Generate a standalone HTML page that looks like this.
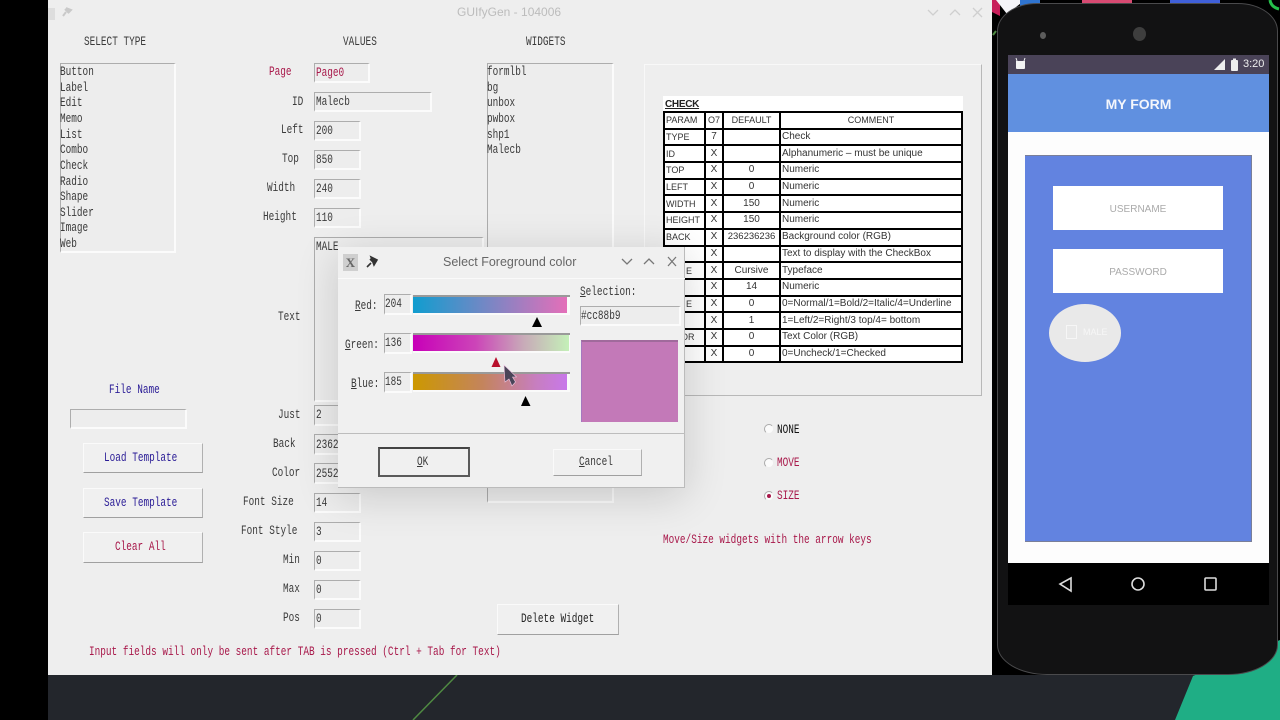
<!DOCTYPE html>
<html><head><meta charset="utf-8"><style>
html,body{margin:0;padding:0;background:#000;width:1280px;height:720px;overflow:hidden}
div{box-sizing:border-box}
#w{position:absolute;left:0;top:0;width:1280px;height:720px;overflow:hidden;filter:blur(.3px)}
.a{position:absolute}
.t{position:absolute;font:13px/14px "Liberation Mono",monospace;color:#3a3a3a;transform:scaleX(.723);transform-origin:0 0;white-space:nowrap}
.r{color:#a8184a}.b{color:#2a1c96}
.i{position:absolute;background:#ededed;border:solid;border-color:#adadad #fbfbfb #fbfbfb #adadad;border-width:1px 2px 2px 1px}
.btn{position:absolute;background:#f0f0f0;border:1px solid;border-color:#fafafa #b0b0b0 #a0a0a0 #fafafa}
table{position:absolute;left:663px;top:111px;width:300px;height:251px;border-collapse:collapse;table-layout:fixed;background:#fff;font:10px/12px "Liberation Sans",sans-serif;color:#333}
td{box-sizing:border-box;border:2px solid #000;padding:0 0 0 1px;height:16.7px;overflow:hidden;white-space:nowrap}
td:first-child,tr:first-child td{font-size:9px}
td.c{text-align:center;padding:0}
</style></head><body><div id="w">
<!-- backdrop -->
<div class="a" style="left:48px;top:675px;width:1232px;height:45px;background:#23262c"></div>
<svg class="a" style="left:0;top:0" width="1280" height="720">
<polygon points="1175,720 1193,676 1280,640 1280,720" fill="#1fae85"/>
<line x1="413" y1="720" x2="457" y2="675" stroke="#4f8a42" stroke-width="1.5"/>
<polygon points="992,0 1000,0 1000,16 992,12" fill="#c81e5a"/>
<polygon points="996,0 1025,0 1007,14" fill="#f4f4f8"/>
<rect x="1020" y="0" width="20" height="8" fill="#2f74d0"/>
<rect x="1082" y="0" width="50" height="3" fill="#d84a72"/>
<rect x="1170" y="0" width="50" height="3" fill="#3f5fd8"/>
<path d="M1270 0q1 7 9 9" stroke="#25c04a" stroke-width="3" fill="none"/>
<path d="M993 35l3-4" stroke="#4f8a42" stroke-width="2"/>
</svg>
<!-- main window -->
<div class="a" style="left:48px;top:0;width:944px;height:675px;background:#eeeeee"></div>
<div class="a" style="left:48px;top:8px;width:7px;height:12px;background:#ddd"></div>
<svg class="a" style="left:60px;top:5px" width="14" height="14"><path d="M3 11L6 7M5 4l4 4M6 3l5 2-3 3" stroke="#c9c9c9" stroke-width="2" fill="#c9c9c9"/></svg>
<div class="a" style="left:457px;top:5px;font:12px/15px 'Liberation Sans',sans-serif;color:#bcbcbc;white-space:nowrap">GUIfyGen - 104006</div>
<svg class="a" style="left:925px;top:6px" width="62" height="14" fill="none" stroke="#cfcfcf" stroke-width="1.3"><path d="M3 4l5 5 5-5M25 9l5-5 5 5M48 2l9 9M57 2l-9 9"/></svg>

<div class="t" style="left:84px;top:35px">SELECT TYPE</div>
<div class="t" style="left:343px;top:35px">VALUES</div>
<div class="t" style="left:526px;top:35px">WIDGETS</div>

<div class="i" style="left:60px;top:63px;width:116px;height:190px"></div>
<div class="t" style="left:60px;top:65px">Button</div><div class="t" style="left:60px;top:81px">Label</div><div class="t" style="left:60px;top:96px">Edit</div><div class="t" style="left:60px;top:112px">Memo</div><div class="t" style="left:60px;top:128px">List</div><div class="t" style="left:60px;top:143px">Combo</div><div class="t" style="left:60px;top:159px">Check</div><div class="t" style="left:60px;top:175px">Radio</div><div class="t" style="left:60px;top:190px">Shape</div><div class="t" style="left:60px;top:206px">Slider</div><div class="t" style="left:60px;top:221px">Image</div><div class="t" style="left:60px;top:237px">Web</div>

<div class="t r" style="left:269px;top:65px">Page</div>
<div class="t" style="left:292px;top:95px">ID</div><div class="t" style="left:281px;top:123px">Left</div><div class="t" style="left:282px;top:152px">Top</div><div class="t" style="left:267px;top:181px">Width</div><div class="t" style="left:263px;top:210px">Height</div><div class="t" style="left:278px;top:310px">Text</div><div class="t" style="left:278px;top:408px">Just</div><div class="t" style="left:273px;top:437px">Back</div><div class="t" style="left:272px;top:466px">Color</div><div class="t" style="left:243px;top:495px">Font Size</div><div class="t" style="left:241px;top:524px">Font Style</div><div class="t" style="left:283px;top:553px">Min</div><div class="t" style="left:283px;top:582px">Max</div><div class="t" style="left:283px;top:611px">Pos</div>

<div class="i" style="left:314px;top:63px;width:56px;height:20px"></div><div class="t r" style="left:316px;top:66px">Page0</div>
<div class="i" style="left:314px;top:92px;width:118px;height:20px"></div><div class="t" style="left:316px;top:95px">Malecb</div>
<div class="i" style="left:314px;top:121px;width:47px;height:20px"></div><div class="t" style="left:316px;top:124px">200</div>
<div class="i" style="left:314px;top:150px;width:47px;height:20px"></div><div class="t" style="left:316px;top:153px">850</div>
<div class="i" style="left:314px;top:179px;width:47px;height:20px"></div><div class="t" style="left:316px;top:182px">240</div>
<div class="i" style="left:314px;top:208px;width:47px;height:20px"></div><div class="t" style="left:316px;top:211px">110</div>
<div class="i" style="left:314px;top:237px;width:170px;height:165px"></div><div class="t" style="left:316px;top:240px">MALE</div>
<div class="i" style="left:314px;top:405px;width:47px;height:21px"></div><div class="t" style="left:316px;top:408px">2</div>
<div class="i" style="left:314px;top:434px;width:47px;height:21px"></div><div class="t" style="left:316px;top:438px">236236236</div>
<div class="i" style="left:314px;top:463px;width:47px;height:21px"></div><div class="t" style="left:316px;top:467px">255255255</div>
<div class="i" style="left:314px;top:493px;width:47px;height:20px"></div><div class="t" style="left:316px;top:496px">14</div>
<div class="i" style="left:314px;top:522px;width:47px;height:20px"></div><div class="t" style="left:316px;top:525px">3</div>
<div class="i" style="left:314px;top:551px;width:47px;height:20px"></div><div class="t" style="left:316px;top:554px">0</div>
<div class="i" style="left:314px;top:580px;width:47px;height:20px"></div><div class="t" style="left:316px;top:583px">0</div>
<div class="i" style="left:314px;top:609px;width:47px;height:20px"></div><div class="t" style="left:316px;top:612px">0</div>

<div class="i" style="left:487px;top:63px;width:127px;height:440px"></div>
<div class="t" style="left:487px;top:65px">formlbl</div><div class="t" style="left:487px;top:81px">bg</div><div class="t" style="left:487px;top:96px">unbox</div><div class="t" style="left:487px;top:112px">pwbox</div><div class="t" style="left:487px;top:128px">shp1</div><div class="t" style="left:487px;top:143px">Malecb</div>

<div class="a" style="left:644px;top:64px;width:338px;height:332px;border:1px solid;border-color:#f8f8f8 #b8b8b8 #b8b8b8 #f8f8f8"></div>
<div class="a" style="left:663px;top:96px;width:300px;height:15px;background:#fff;font:bold 10px/17px 'Liberation Sans',sans-serif;color:#222;padding-left:2px;letter-spacing:-.3px"><u>CHECK</u></div>
<table>
<colgroup><col style="width:41px"><col style="width:18px"><col style="width:57px"><col></colgroup>
<tr><td>PARAM</td><td class="c">O7</td><td class="c">DEFAULT</td><td class="c">COMMENT</td></tr>
<tr><td>TYPE</td><td class="c">7</td><td></td><td>Check</td></tr>
<tr><td>ID</td><td class="c">X</td><td></td><td>Alphanumeric – must be unique</td></tr>
<tr><td>TOP</td><td class="c">X</td><td class="c">0</td><td>Numeric</td></tr>
<tr><td>LEFT</td><td class="c">X</td><td class="c">0</td><td>Numeric</td></tr>
<tr><td>WIDTH</td><td class="c">X</td><td class="c">150</td><td>Numeric</td></tr>
<tr><td>HEIGHT</td><td class="c">X</td><td class="c">150</td><td>Numeric</td></tr>
<tr><td>BACK</td><td class="c">X</td><td class="c" style="font-size:9.500px">236236236</td><td>Background color (RGB)</td></tr>
<tr><td></td><td class="c">X</td><td></td><td>Text to display with the CheckBox</td></tr>
<tr><td style="padding-left:21px">E</td><td class="c">X</td><td class="c">Cursive</td><td>Typeface</td></tr>
<tr><td></td><td class="c">X</td><td class="c">14</td><td>Numeric</td></tr>
<tr><td style="padding-left:21px">E</td><td class="c">X</td><td class="c">0</td><td>0=Normal/1=Bold/2=Italic/4=Underline</td></tr>
<tr><td></td><td class="c">X</td><td class="c">1</td><td>1=Left/2=Right/3 top/4= bottom</td></tr>
<tr><td style="padding-left:16px">OR</td><td class="c">X</td><td class="c">0</td><td>Text Color (RGB)</td></tr>
<tr><td></td><td class="c">X</td><td class="c">0</td><td>0=Uncheck/1=Checked</td></tr>
</table>

<div class="t b" style="left:109px;top:383px">File Name</div>
<div class="i" style="left:70px;top:409px;width:117px;height:20px"></div>
<div class="btn" style="left:83px;top:443px;width:120px;height:30px"></div><div class="t b" style="left:104px;top:451px">Load Template</div>
<div class="btn" style="left:83px;top:488px;width:120px;height:30px"></div><div class="t b" style="left:104px;top:496px">Save Template</div>
<div class="btn" style="left:83px;top:532px;width:120px;height:31px"></div><div class="t r" style="left:115px;top:540px">Clear All</div>
<div class="btn" style="left:497px;top:604px;width:122px;height:31px"></div><div class="t" style="left:521px;top:612px;color:#222">Delete Widget</div>
<div class="t r" style="left:89px;top:645px">Input fields will only be sent after TAB is pressed (Ctrl + Tab for Text)</div>

<div class="a" style="left:764px;top:424px;width:10px;height:10px;border-radius:50%;background:#fbfbfb;border:1px solid #eee;border-left-color:#aaa;border-top-color:#aaa"></div><div class="t" style="left:777px;top:423px;color:#111">NONE</div>
<div class="a" style="left:764px;top:458px;width:10px;height:10px;border-radius:50%;background:#fbfbfb;border:1px solid #eee;border-left-color:#aaa;border-top-color:#aaa"></div><div class="t r" style="left:777px;top:456px">MOVE</div>
<div class="a" style="left:764px;top:491px;width:10px;height:10px;border-radius:50%;background:#fbfbfb;border:1px solid #eee;border-left-color:#aaa;border-top-color:#aaa"></div><div class="a" style="left:767px;top:494px;width:4px;height:4px;border-radius:50%;background:#a8184a"></div><div class="t r" style="left:777px;top:489px">SIZE</div>
<div class="t r" style="left:663px;top:533px">Move/Size widgets with the arrow keys</div>

<!-- dialog -->
<div class="a" style="left:338px;top:247px;width:347px;height:241px;background:#f0f0f0;border-right:1px solid #bbb;border-bottom:1px solid #bbb;box-shadow:0 8px 40px rgba(0,0,0,.16)"></div>
<div class="a" style="left:338px;top:278px;width:347px;height:1px;background:#fafafa"></div>
<div class="a" style="left:343px;top:254px;width:15px;height:17px;background:#cfcfcf;font:bold 13px/17px 'Liberation Serif',serif;color:#666;text-align:center">X</div>
<svg class="a" style="left:365px;top:254px" width="15" height="15"><path d="M2 13L6 9M5 5l5 5M6 3l6 3-3 5z" stroke="#333" stroke-width="1.600" fill="#333"/></svg>
<div class="a" style="left:443px;top:254px;font:12.500px/16px 'Liberation Sans',sans-serif;color:#666;white-space:nowrap">Select Foreground color</div>
<svg class="a" style="left:620px;top:255px" width="60" height="14" fill="none" stroke="#777" stroke-width="1.300"><path d="M2 4l5 5 5-5M24 9l5-5 5 5M48 2l8 9M56 2l-8 9"/></svg>

<div class="t" style="left:355px;top:299px"><u>R</u>ed:</div><div class="t" style="left:345px;top:338px"><u>G</u>reen:</div><div class="t" style="left:351px;top:377px"><u>B</u>lue:</div>
<div class="i" style="left:384px;top:294px;width:28px;height:21px"></div><div class="t" style="left:385px;top:297px">204</div>
<div class="i" style="left:384px;top:333px;width:28px;height:21px"></div><div class="t" style="left:385px;top:336px">136</div>
<div class="i" style="left:384px;top:372px;width:28px;height:21px"></div><div class="t" style="left:385px;top:375px">185</div>
<div class="a" style="left:413px;top:295px;width:157px;height:20px;background:#fafafa;border-top:2px solid #9a9a9a"></div><div class="a" style="left:413px;top:297px;width:154px;height:16px;background:linear-gradient(90deg,#109dcf,#e46fb9)"></div>
<div class="a" style="left:413px;top:333px;width:157px;height:20px;background:#fafafa;border-top:2px solid #9a9a9a"></div><div class="a" style="left:413px;top:335px;width:156px;height:16px;background:linear-gradient(90deg,#c800b8,#cc44b8 40%,#c8a8b8 70%,#c4f0b8)"></div>
<div class="a" style="left:413px;top:372px;width:157px;height:20px;background:#fafafa;border-top:2px solid #9a9a9a"></div><div class="a" style="left:413px;top:374px;width:154px;height:16px;background:linear-gradient(90deg,#cc9800,#c4845c 45%,#c77ec0 80%,#c878ea)"></div>
<svg class="a" style="left:520px;top:316px" width="24" height="14"><polygon points="17,1 12,11 22,11" fill="#000"/></svg>
<svg class="a" style="left:489px;top:356px" width="14" height="14"><polygon points="7,1 2.500,11 11.500,11" fill="#b8102c"/></svg>
<svg class="a" style="left:519px;top:395px" width="14" height="14"><polygon points="6.500,1 2,11 11.500,11" fill="#000"/></svg>
<div class="t" style="left:580px;top:285px"><u>S</u>election:</div>
<div class="i" style="left:580px;top:306px;width:101px;height:20px"></div><div class="t" style="left:581px;top:309px">#cc88b9</div>
<div class="a" style="left:581px;top:340px;width:97px;height:82px;background:#c379b8;border-top:2px solid #a06a9c;border-left:1px solid #a578c0"></div>
<svg class="a" style="left:500px;top:362px" width="20" height="26"><path d="M4 3L5 20 9 17 12 24 15.500 20 12.500 15 16.500 15Z" fill="#4a4458" stroke="#efc8e4" stroke-width=".6"/></svg>
<div class="a" style="left:338px;top:433px;width:347px;height:1px;background:#bdbdbd"></div>
<div class="a" style="left:378px;top:447px;width:92px;height:30px;background:#f0f0f0;border:2px solid #5a5a5a;border-top-color:#444"></div><div class="t" style="left:417px;top:455px"><u>O</u>K</div>
<div class="btn" style="left:553px;top:449px;width:89px;height:27px"></div><div class="t" style="left:579px;top:455px"><u>C</u>ancel</div>

<!-- phone -->
<div class="a" style="left:997px;top:3px;width:281px;height:672px;background:#121213;border-radius:40px 40px 50px 50px / 28px 28px 30px 30px;border:1px solid #4a4a4c"></div>
<div class="a" style="left:1040px;top:32px;width:6px;height:7px;border-radius:50%;background:#5c5c5c"></div>
<div class="a" style="left:1133px;top:27px;width:13px;height:14px;border-radius:50%;background:#3e3e3e"></div>
<div class="a" style="left:1008px;top:55px;width:261px;height:19px;background:#4a4358"></div>
<svg class="a" style="left:1014px;top:57px" width="14" height="14"><path d="M2 4h9v7q0 1-1 1H3q-1 0-1-1z" fill="#f2f2f2"/><path d="M3 4L2 1M10 4l1-3" stroke="#f2f2f2"/></svg>
<svg class="a" style="left:1210px;top:57px" width="32" height="14"><polygon points="15,2 15,13 4,13" fill="#eee"/><rect x="21" y="3" width="7" height="11" rx="1" fill="#eee"/><rect x="23" y="1.500" width="3" height="2" fill="#eee"/></svg>
<div class="a" style="left:1243px;top:57px;font:11px/14px 'Liberation Sans',sans-serif;color:#eee">3:20</div>
<div class="a" style="left:1008px;top:74px;width:261px;height:58px;background:#6090e0;color:#f4f6fc;font:bold 14px/60px 'Liberation Sans',sans-serif;text-align:center">MY FORM</div>
<div class="a" style="left:1008px;top:132px;width:261px;height:431px;background:#fdfdfd"></div>
<div class="a" style="left:1025px;top:155px;width:227px;height:387px;background:#6283e0;border:1px solid #7a7f99;border-width:1px 1px 1px 0"></div>
<div class="a" style="left:1053px;top:186px;width:170px;height:44px;background:#fff;color:#aaa;font:10px/47px 'Liberation Sans',sans-serif;text-align:center">USERNAME</div>
<div class="a" style="left:1053px;top:249px;width:170px;height:44px;background:#fff;color:#aaa;font:10px/47px 'Liberation Sans',sans-serif;text-align:center">PASSWORD</div>
<div class="a" style="left:1049px;top:304px;width:72px;height:58px;border-radius:50%;background:#e9e9e9"></div>
<div class="a" style="left:1066px;top:325px;width:11px;height:14px;border:1px solid #f6f6f6"></div>
<div class="a" style="left:1083px;top:326px;font:9px/12px 'Liberation Sans',sans-serif;color:#f6f6f6">MALE</div>
<div class="a" style="left:1008px;top:563px;width:261px;height:42px;background:#000"></div>
<svg class="a" style="left:1050px;top:570px" width="180" height="28" fill="none" stroke="#dcdcdc" stroke-width="1.600"><path d="M21 8L10 14 21 21Z"/><circle cx="88" cy="14" r="6"/><rect x="155" y="8" width="11" height="12" rx="1"/></svg>
</div></body></html>
